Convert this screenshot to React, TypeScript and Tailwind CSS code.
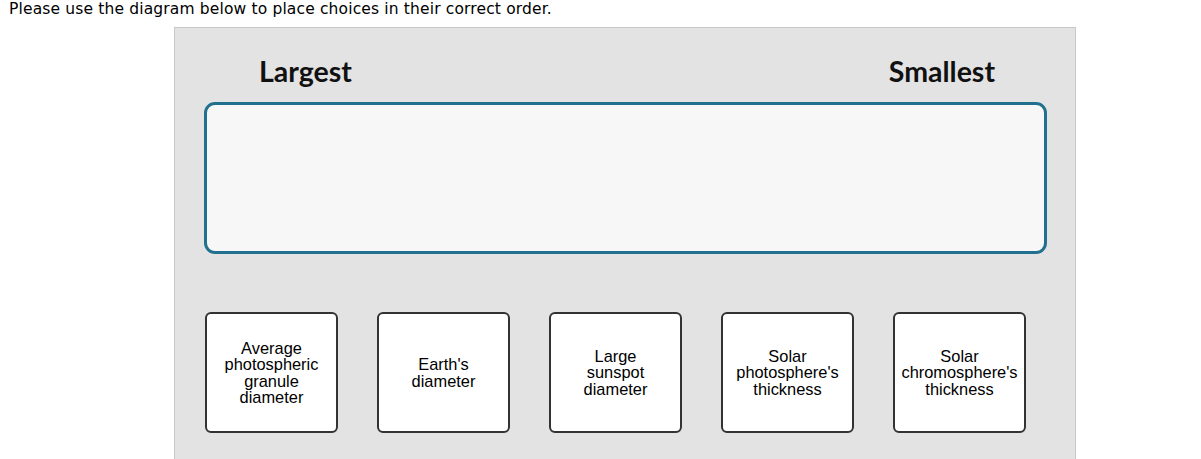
import React from 'react';

const choices: string[][] = [
  ['Average', 'photospheric', 'granule', 'diameter'],
  ["Earth's", 'diameter'],
  ['Large', 'sunspot', 'diameter'],
  ['Solar', "photosphere's", 'thickness'],
  ['Solar', "chromosphere's", 'thickness'],
];

const ChoiceCard: React.FC<{ lines: string[] }> = ({ lines }) => (
  <div className="w-[133px] h-[121px] shrink-0 rounded-[6px] border-2 border-[#333333] bg-white flex items-center justify-center">
    <p className="text-center text-[16.4px] leading-[16.5px] text-black font-['Liberation_Sans',Arial,sans-serif]">
      {lines.map((l, i) => (
        <span key={i} className="block">
          {l}
        </span>
      ))}
    </p>
  </div>
);

export default function App() {
  return (
    <div className="h-[459px] overflow-hidden bg-white">
      <p className="pl-[9px] h-[27px] text-[15.5px] leading-[18px] tracking-[0.15px] text-black font-['DejaVu_Sans',Verdana,sans-serif]">
        Please use the diagram below to place choices in their correct order.
      </p>
      <div className="ml-[174px] w-[902px] h-[460px] border border-[#c8c8c8] bg-[#e3e3e3]">
        <div className="flex justify-between pl-[84px] pr-[80px] pt-[27px] h-[74px] font-['Lato','Open_Sans',sans-serif] font-bold text-[28.5px] leading-[32px] text-[#111]">
          <span>Largest</span>
          <span>Smallest</span>
        </div>
        <div className="ml-[29px] w-[843px] h-[152px] rounded-[11px] border-[3px] border-[#21708f] bg-[#f7f7f7]" />
        <div className="flex gap-[39px] pl-[30px] pt-[58px]">
          {choices.map((c, i) => (
            <ChoiceCard key={i} lines={c} />
          ))}
        </div>
      </div>
    </div>
  );
}
